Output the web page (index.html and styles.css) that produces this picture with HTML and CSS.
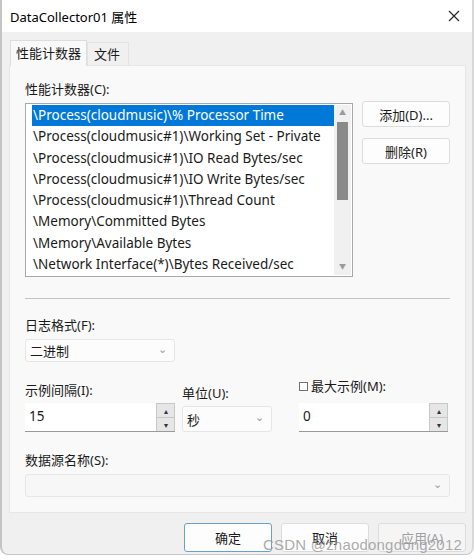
FILE: index.html
```html
<!DOCTYPE html>
<html lang="zh-CN">
<head>
    <meta charset="UTF-8">
    <title>DataCollector01 属性</title>
    <link rel="stylesheet" href="styles.css">
</head>
<body>
    <div class="window">
        <div class="titlebar">
            <span class="title">DataCollector01 属性</span>
            <svg class="close" width="12" height="12" viewBox="0 0 12 12">
                <path d="M1 1 L11 11 M11 1 L1 11" stroke="#222" stroke-width="1.1" fill="none"/>
            </svg>
        </div>

        <div class="tabs">
            <div class="tab active">性能计数器</div>
            <div class="tab">文件</div>
        </div>

        <div class="panel">
            <div class="label">性能计数器(C):</div>
            <div class="counter-row">
                <div class="listbox">
                    <ul class="items">
                        <li class="selected">\Process(cloudmusic)\% Processor Time</li>
                        <li>\Process(cloudmusic#1)\Working Set - Private</li>
                        <li>\Process(cloudmusic#1)\IO Read Bytes/sec</li>
                        <li>\Process(cloudmusic#1)\IO Write Bytes/sec</li>
                        <li>\Process(cloudmusic#1)\Thread Count</li>
                        <li>\Memory\Committed Bytes</li>
                        <li>\Memory\Available Bytes</li>
                        <li>\Network Interface(*)\Bytes Received/sec</li>
                    </ul>
                    <div class="scrollbar">
                        <span class="arrow">▲</span>
                        <div class="track"><div class="thumb"></div></div>
                        <span class="arrow">▼</span>
                    </div>
                </div>
                <div class="side-buttons">
                    <button class="btn">添加(D)...</button>
                    <button class="btn">删除(R)</button>
                </div>
            </div>

            <div class="separator"></div>

            <div class="label">日志格式(F):</div>
            <div class="combo format">
                <span>二进制</span>
                <span class="chev">⌄</span>
            </div>

            <div class="interval-row">
                <div class="field f-interval">
                    <div class="label">示例间隔(I):</div>
                    <div class="spin">
                        <span class="value">15</span>
                        <div class="spin-btns"><span>▴</span><span>▾</span></div>
                    </div>
                </div>
                <div class="field f-unit">
                    <div class="label">单位(U):</div>
                    <div class="combo">
                        <span>秒</span>
                        <span class="chev">⌄</span>
                    </div>
                </div>
                <div class="field f-max">
                    <div class="label"><span class="check"></span>最大示例(M):</div>
                    <div class="spin">
                        <span class="value">0</span>
                        <div class="spin-btns"><span>▴</span><span>▾</span></div>
                    </div>
                </div>
            </div>

            <div class="label">数据源名称(S):</div>
            <div class="combo disabled">
                <span></span>
                <span class="chev">⌄</span>
            </div>
        </div>

        <div class="footer">
            <button class="btn default">确定</button>
            <button class="btn">取消</button>
            <button class="btn" disabled>应用(A)</button>
        </div>
        <div class="watermark">CSDN @zhaodongdong2012</div>
    </div>
</body>
</html>
```

FILE: styles.css
```css
body {
    margin: 0;
    background: #ffffff;
    font-family: "Noto Sans", "Noto Sans CJK SC", sans-serif;
    font-size: 13px;
    color: #1a1a1a;
}
.window {
    position: relative;
    width: 470px;
    height: 554px;
    background: #f0f0f0;
    border-left: 2px solid #c4c4c4;
    border-right: 2px solid #d8d8d8;
    border-bottom: 1px solid #c8c8c8;
    border-radius: 0 0 8px 8px;
    overflow: hidden;
}
.titlebar {
    height: 32px;
    background: #ffffff;
    display: flex;
    align-items: center;
    justify-content: space-between;
    padding: 0 12px 0 8px;
}
.title {
    font-size: 13px;
    color: #000;
}
.tabs {
    display: flex;
    align-items: flex-end;
    height: 33px;
    padding-left: 8px;
}
.tab {
    height: 22px;
    line-height: 22px;
    padding: 0 8px 0 6px;
    border: 1px solid #e3e3e3;
    border-bottom: none;
    background: #f0f0f0;
    font-size: 13px;
}
.tab.active {
    height: 25px;
    line-height: 25px;
    padding: 0 5px;
    background: #f9f9f9;
    border-color: #dcdcdc;
    margin-bottom: -1px;
    position: relative;
}
.panel {
    margin: 0 6px 0 7px;
    height: 448px;
    background: #f9f9f9;
    border: 1px solid #e6e6e6;
    padding: 14px 14px 0 15px;
    box-sizing: border-box;
}
.label {
    height: 19px;
    line-height: 19px;
    margin-bottom: 4px;
}
.counter-row {
    display: flex;
}
.listbox {
    width: 328px;
    height: 174px;
    box-sizing: border-box;
    border: 1px solid #a8a8a8;
    background: #fff;
    display: flex;
    padding: 1px 1px 1px 6px;
}
.items {
    list-style: none;
    margin: 0;
    padding: 0;
    flex: 1;
    overflow: hidden;
}
.items li {
    height: 21.3px;
    line-height: 21px;
    padding-left: 1px;
    white-space: nowrap;
    font-size: 13.5px;
}
.items li.selected {
    background: #0078d7;
    color: #fff;
}
.scrollbar {
    width: 17px;
    background: #f0f0f0;
    display: flex;
    flex-direction: column;
    align-items: center;
}
.arrow {
    font-size: 7px;
    color: #9a9a9a;
    height: 16px;
    line-height: 16px;
}
.track {
    flex: 1;
    width: 100%;
    display: flex;
    justify-content: center;
}
.thumb {
    width: 11px;
    height: 78px;
    margin-top: 1px;
    background: #8a8a8a;
}
.side-buttons {
    display: flex;
    flex-direction: column;
    gap: 11px;
    margin-left: 9px;
}
.btn {
    width: 88px;
    height: 26px;
    background: #fdfdfd;
    border: 1px solid #dcdcdc;
    border-radius: 3px;
    font-family: inherit;
    font-size: 13px;
    color: #1a1a1a;
    padding: 0;
}
.side-buttons .btn {
    margin-top: -2px;
}
.side-buttons .btn + .btn {
    margin-top: 0;
}
.btn:disabled {
    color: #a0a0a0;
    background: #f5f5f5;
}
.btn.default {
    border-color: #6b9fc7;
}
.separator {
    height: 1px;
    background: #c4c4c4;
    margin: 21px 0 17px;
    width: 425px;
}
.combo {
    height: 23px;
    box-sizing: border-box;
    border: 1px solid #e6e6e6;
    border-radius: 3px;
    background: #fcfcfc;
    display: flex;
    align-items: center;
    justify-content: space-between;
    padding: 0 7px 0 4px;
}
.combo .chev {
    color: #9a9a9a;
    font-size: 11px;
    line-height: 8px;
    height: 12px;
}
.format {
    width: 150px;
}
.interval-row {
    display: flex;
    margin-top: 19px;
    margin-bottom: 19px;
}
.field .label {
    margin-bottom: 3px;
}
.f-interval {
    width: 150px;
}
.f-unit {
    width: 90px;
    margin-left: 7px;
    padding-top: 3px;
}
.f-unit .combo {
    height: 26px;
}
.f-max {
    width: 149px;
    margin-left: 27px;
    margin-top: -4px;
}
.f-max .label {
    display: flex;
    align-items: center;
    margin-bottom: 7px;
}
.check {
    width: 7px;
    height: 7px;
    border: 1px solid #707070;
    margin-right: 3px;
    background: #fff;
}
.spin {
    height: 29px;
    box-sizing: border-box;
    background: #fff;
    border-bottom: 1px solid #9a9a9a;
    display: flex;
    justify-content: space-between;
}
.spin .value {
    padding-left: 4px;
    line-height: 27px;
    font-size: 13.5px;
}
.spin-btns {
    width: 17px;
    display: flex;
    flex-direction: column;
    border: 1px solid #c8c8c8;
    border-bottom: none;
    background: #e6e6e6;
}
.spin-btns span {
    flex: 1;
    font-size: 8px;
    text-align: center;
    line-height: 13px;
    color: #333;
}
.spin-btns span + span {
    border-top: 1px solid #c8c8c8;
}
.disabled {
    width: 425px;
    background: #f7f7f7;
}
.footer {
    display: flex;
    justify-content: flex-end;
    gap: 9px;
    padding: 10px 6px 0 0;
}
.footer .btn {
    height: 29px;
}
.watermark {
    position: absolute;
    right: 10px;
    bottom: 1px;
    font-family: "Liberation Sans", sans-serif;
    font-size: 15px;
    color: rgba(150, 150, 150, 0.8);
    letter-spacing: 0.2px;
}
```
